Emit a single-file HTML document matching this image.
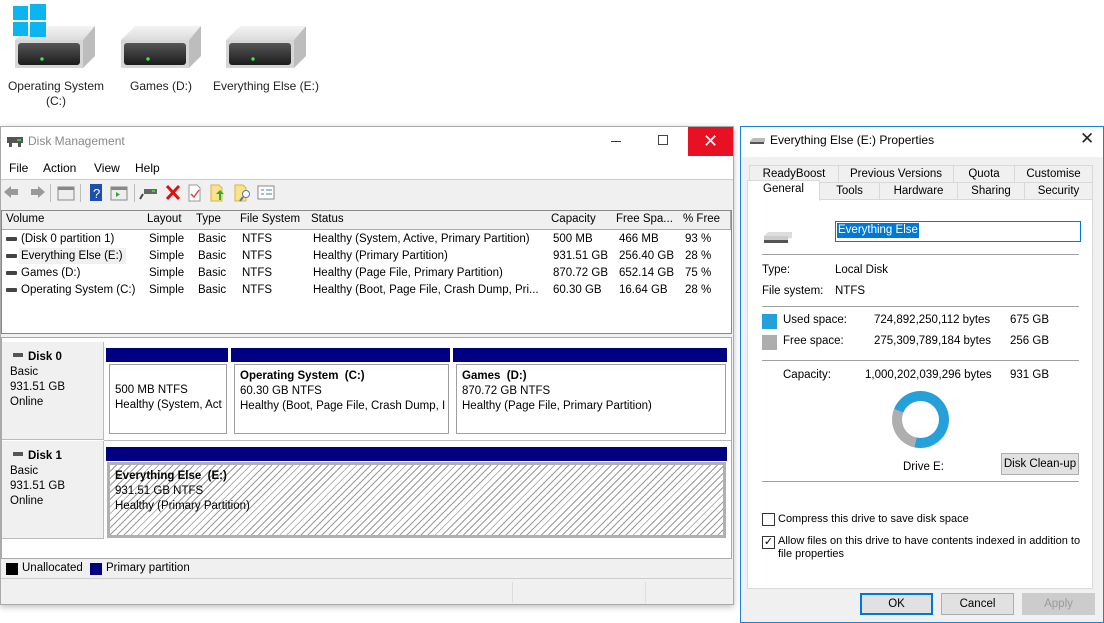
<!DOCTYPE html>
<html><head><meta charset="utf-8"><style>
*{margin:0;padding:0;box-sizing:border-box}
body{width:1104px;height:623px;background:#fff;position:relative;overflow:hidden;font-family:"Liberation Sans",sans-serif;font-size:11.5px;color:#000}
.a{position:absolute;white-space:nowrap}
.drv{position:absolute;width:84px;height:46px}
.lbl{position:absolute;width:110px;text-align:center;font-size:12px;line-height:15px;color:#222}
.hdr{position:absolute;top:211px;height:19px;background:#f0f0f0;border-right:1px solid #aaa;border-bottom:1px solid #aaa;padding:2px 4px;white-space:nowrap;overflow:hidden}
.row{position:absolute;white-space:nowrap}
.bar{position:absolute;background:#000080;height:14px}
.pbox{position:absolute;border:1px solid #a0a0a0;background:#fff;padding:4px 5px;line-height:15px;overflow:hidden;white-space:nowrap}
.tab{position:absolute;height:18px;border:1px solid #d9d9d9;background:#f0f0f0;text-align:center;line-height:16px}
.btn{position:absolute;height:22px;border:1px solid #adadad;background:#e1e1e1;text-align:center;line-height:20px}
.sep{position:absolute;height:1px;background:#a0a0a0}
.vi{position:absolute;left:6px;width:11px;height:4px;background:#444;border-radius:1px}
</style></head><body>

<!-- desktop icons -->
<svg width="0" height="0" style="position:absolute"><defs>
<linearGradient id="g1" x1="0" y1="0" x2="0" y2="1"><stop offset="0" stop-color="#f4f4f4"/><stop offset="1" stop-color="#dcdcdc"/></linearGradient>
<linearGradient id="g2" x1="0" y1="0" x2="0" y2="1"><stop offset="0" stop-color="#555"/><stop offset="1" stop-color="#1c1c1c"/></linearGradient>
<symbol id="hd" viewBox="0 0 84 46"><path d="M16 2 L82 2 L70 16 L2 16 Z" fill="url(#g1)"/><path d="M70 16 L82 2 L82 32 L70 44 Z" fill="#bdbdbd"/><rect x="2" y="16" width="68" height="28" fill="#d6d6d6"/><rect x="5" y="19" width="62" height="22" rx="3" fill="url(#g2)"/><circle cx="29" cy="35" r="1.7" fill="#3bea47"/></symbol>
</defs></svg>
<svg class="drv" style="left:13px;top:24px"><use href="#hd"/></svg>
<svg class="drv" style="left:119px;top:24px"><use href="#hd"/></svg>
<svg class="drv" style="left:224px;top:24px"><use href="#hd"/></svg>
<svg class="a" style="left:13px;top:4px" width="34" height="33"><rect x="0" y="2" width="15" height="14" fill="#0cb4f0"/><rect x="17" y="0" width="16" height="16" fill="#0cb4f0"/><rect x="0" y="18" width="15" height="14" fill="#0cb4f0"/><rect x="17" y="18" width="16" height="16" fill="#0cb4f0"/></svg>
<div class="lbl" style="left:1px;top:79px">Operating System<br>(C:)</div>
<div class="lbl" style="left:106px;top:79px">Games (D:)</div>
<div class="lbl" style="left:211px;top:79px">Everything Else (E:)</div>

<!-- Disk management window -->
<div class="a" style="left:0;top:126px;width:734px;height:479px;border:1px solid #aaa;background:#f0f0f0;box-shadow:0 2px 6px rgba(0,0,0,.25)"></div>
<div class="a" style="left:1px;top:127px;width:732px;height:52px;background:#fff"></div>
<svg class="a" style="left:7px;top:134px" width="16" height="14"><rect x="0" y="3" width="16" height="6" fill="#555"/><rect x="10" y="5" width="4" height="2" fill="#4c4"/><rect x="2" y="9" width="3" height="4" fill="#555"/><rect x="11" y="9" width="3" height="4" fill="#555"/></svg>
<div class="a" style="left:28px;top:134px;color:#888;font-size:12px">Disk Management</div>
<div class="a" style="left:611px;top:141px;width:10px;height:1px;background:#333"></div>
<div class="a" style="left:658px;top:135px;width:10px;height:10px;border:1px solid #444"></div>
<div class="a" style="left:688px;top:127px;width:45px;height:29px;background:#e81123;color:#fff;text-align:center;font-size:18px;line-height:28px">✕</div>
<div class="a" style="left:9px;top:161px;font-size:12px">File</div>
<div class="a" style="left:43px;top:161px;font-size:12px">Action</div>
<div class="a" style="left:94px;top:161px;font-size:12px">View</div>
<div class="a" style="left:135px;top:161px;font-size:12px">Help</div>
<div class="a" style="left:1px;top:179px;width:732px;height:1px;background:#ccc"></div>
<!-- toolbar icons -->
<svg class="a" style="left:3px;top:183px" width="280" height="20">
<path d="M1 9 L8 3 L8 6 L15 6 L15 12 L8 12 L8 15 Z" fill="#999"/>
<path d="M42 9 L35 3 L35 6 L28 6 L28 12 L35 12 L35 15 Z" fill="#999"/>
<rect x="47" y="1" width="1" height="18" fill="#bbb"/>
<rect x="55" y="4" width="16" height="13" fill="#eee" stroke="#888"/><rect x="55" y="4" width="16" height="3" fill="#888"/>
<rect x="77" y="1" width="1" height="18" fill="#bbb"/>
<rect x="87" y="1" width="12" height="17" fill="#1c4fb0"/><text x="90" y="15" fill="#fff" font-size="13" font-family="Liberation Sans">?</text>
<rect x="108" y="4" width="16" height="13" fill="#eee" stroke="#888"/><rect x="108" y="4" width="16" height="3" fill="#888"/><path d="M113 9 L117 11.5 L113 14Z" fill="#3a3"/>
<rect x="131" y="1" width="1" height="18" fill="#bbb"/>
<rect x="141" y="6" width="13" height="5" fill="#666"/><rect x="149" y="7" width="3" height="2" fill="#4c4"/><path d="M140 11 L137 16" stroke="#444" stroke-width="2"/>
<path d="M164 3 L176 16 M176 3 L164 16" stroke="#d11" stroke-width="3"/>
<path d="M186 2 L194 2 L197 5 L197 18 L186 18Z" fill="#fff" stroke="#999"/><path d="M188 11 L191 14 L196 7" stroke="#d44" fill="none" stroke-width="1.5"/>
<path d="M208 2 L216 2 L219 5 L219 18 L208 18Z" fill="#fbe38a" stroke="#d8b44a"/><path d="M216 17 L216 11 L213 11 L217 7 L221 11 L218 11 L218 17Z" fill="#3a3"/>
<path d="M232 2 L240 2 L243 5 L243 18 L232 18Z" fill="#fbe38a" stroke="#d8b44a"/><circle cx="243" cy="11" r="3.5" fill="#fff" stroke="#57a"/><path d="M240 14 L237 18" stroke="#57a" stroke-width="2"/>
<rect x="255" y="3" width="16" height="13" fill="#fff" stroke="#888"/><path d="M258 7h3M258 11h3M263 7h6M263 11h6" stroke="#57a"/>
</svg>
<!-- list -->
<div class="a" style="left:1px;top:210px;width:731px;height:124px;background:#fff;border:1px solid #888"></div>
<div class="hdr" style="left:2px;width:142px">Volume</div>
<div class="hdr" style="left:143px;width:50px">Layout</div>
<div class="hdr" style="left:192px;width:45px">Type</div>
<div class="hdr" style="left:236px;width:72px">File System</div>
<div class="hdr" style="left:307px;width:241px">Status</div>
<div class="hdr" style="left:547px;width:66px">Capacity</div>
<div class="hdr" style="left:612px;width:68px">Free Spa...</div>
<div class="hdr" style="left:679px;width:52px">% Free</div>
<div class="a" style="left:19px;top:248px;width:107px;height:16px;background:#f0f0f0"></div>
<div class="vi" style="top:237px"></div><div class="vi" style="top:254px"></div><div class="vi" style="top:271px"></div><div class="vi" style="top:288px"></div>
<div class="row" style="left:21px;top:231px;line-height:17px">(Disk 0 partition 1)<br>Everything Else (E:)<br>Games (D:)<br>Operating System (C:)</div>
<div class="row" style="left:149px;top:231px;line-height:17px">Simple<br>Simple<br>Simple<br>Simple</div>
<div class="row" style="left:198px;top:231px;line-height:17px">Basic<br>Basic<br>Basic<br>Basic</div>
<div class="row" style="left:242px;top:231px;line-height:17px">NTFS<br>NTFS<br>NTFS<br>NTFS</div>
<div class="row" style="left:313px;top:231px;line-height:17px">Healthy (System, Active, Primary Partition)<br>Healthy (Primary Partition)<br>Healthy (Page File, Primary Partition)<br>Healthy (Boot, Page File, Crash Dump, Pri...</div>
<div class="row" style="left:553px;top:231px;line-height:17px">500 MB<br>931.51 GB<br>870.72 GB<br>60.30 GB</div>
<div class="row" style="left:619px;top:231px;line-height:17px">466 MB<br>256.40 GB<br>652.14 GB<br>16.64 GB</div>
<div class="row" style="left:685px;top:231px;line-height:17px">93 %<br>28 %<br>75 %<br>28 %</div>
<!-- graphic area -->
<div class="a" style="left:1px;top:337px;width:731px;height:222px;background:#fff;border:1px solid #aaa"></div>
<div class="a" style="left:2px;top:342px;width:102px;height:98px;background:#f0f0f0;border-right:1px solid #bbb;border-bottom:1px solid #bbb"></div>
<div class="a" style="left:2px;top:441px;width:102px;height:98px;background:#f0f0f0;border-right:1px solid #bbb;border-bottom:1px solid #bbb"></div>
<div class="a" style="left:104px;top:440px;width:627px;height:1px;background:#bbb"></div>
<div class="a" style="left:13px;top:353px;width:10px;height:4px;background:#555"></div>
<div class="a" style="left:13px;top:452px;width:10px;height:4px;background:#555"></div>
<div class="a" style="left:10px;top:350px;line-height:15px"><b style="margin-left:18px">Disk 0</b><br>Basic<br>931.51 GB<br>Online</div>
<div class="a" style="left:10px;top:449px;line-height:15px"><b style="margin-left:18px">Disk 1</b><br>Basic<br>931.51 GB<br>Online</div>
<div class="bar" style="left:106px;top:348px;width:122px"></div>
<div class="bar" style="left:231px;top:348px;width:219px"></div>
<div class="bar" style="left:453px;top:348px;width:274px"></div>
<div class="pbox" style="left:109px;top:364px;width:118px;height:70px;padding-top:18px">500 MB NTFS<br>Healthy (System, Act</div>
<div class="pbox" style="left:234px;top:364px;width:215px;height:70px"><b>Operating System&nbsp; (C:)</b><br>60.30 GB NTFS<br>Healthy (Boot, Page File, Crash Dump, I</div>
<div class="pbox" style="left:456px;top:364px;width:270px;height:70px"><b>Games&nbsp; (D:)</b><br>870.72 GB NTFS<br>Healthy (Page File, Primary Partition)</div>
<div class="bar" style="left:106px;top:447px;width:621px"></div>
<div class="pbox" style="left:107px;top:462px;width:619px;height:76px;border:3px solid #b0b0b0;background:repeating-linear-gradient(135deg,#fff 0 4px,#9a9a9a 4px 5px)"><b>Everything Else&nbsp; (E:)</b><br>931.51 GB NTFS<br>Healthy (Primary Partition)</div>
<div class="a" style="left:1px;top:559px;width:731px;height:20px;background:#f0f0f0;border-bottom:1px solid #ccc"></div>
<div class="a" style="left:6px;top:563px;width:12px;height:12px;background:#000"></div>
<div class="a" style="left:22px;top:562px">Unallocated</div>
<div class="a" style="left:90px;top:563px;width:12px;height:12px;background:#000080"></div>
<div class="a" style="left:106px;top:562px">Primary partition</div>
<div class="a" style="left:512px;top:582px;width:1px;height:21px;background:#ddd"></div>
<div class="a" style="left:645px;top:582px;width:1px;height:21px;background:#ddd"></div>

<!-- Properties dialog -->
<div class="a" style="left:740px;top:126px;width:364px;height:497px;border:1px solid #1883d7;background:#f0f0f0"></div>
<div class="a" style="left:741px;top:127px;width:362px;height:30px;background:#fff"></div>
<svg class="a" style="left:750px;top:137px" width="16" height="8"><path d="M0 4 L3 1 L15 1 L15 5 L0 7Z" fill="#bbb"/><rect x="0" y="5" width="14" height="2" fill="#555"/></svg>
<div class="a" style="left:770px;top:133px;font-size:12px">Everything Else (E:) Properties</div>
<div class="a" style="left:1080px;top:129px;font-size:17px;color:#222">✕</div>
<div class="a" style="left:747px;top:199px;width:346px;height:390px;background:#fff;border:1px solid #d9d9d9"></div>
<div class="tab" style="left:749px;top:165px;width:90px">ReadyBoost</div>
<div class="tab" style="left:838px;top:165px;width:116px">Previous Versions</div>
<div class="tab" style="left:953px;top:165px;width:62px">Quota</div>
<div class="tab" style="left:1014px;top:165px;width:79px">Customise</div>
<div class="tab" style="left:819px;top:182px;width:61px">Tools</div>
<div class="tab" style="left:879px;top:182px;width:79px">Hardware</div>
<div class="tab" style="left:957px;top:182px;width:68px">Sharing</div>
<div class="tab" style="left:1024px;top:182px;width:69px">Security</div>
<div class="tab" style="left:747px;top:180px;width:73px;height:21px;background:#fff;border-bottom:none">General</div>
<svg class="a" style="left:763px;top:230px" width="30" height="14"><path d="M1 6 L5 2 L29 2 L29 8 L1 12Z" fill="#ddd"/><rect x="1" y="6" width="24" height="6" fill="#ccc"/><rect x="1" y="10" width="24" height="3" fill="#555"/></svg>
<div class="a" style="left:835px;top:221px;width:246px;height:21px;border:1px solid #0078d7;background:#fff"></div>
<div class="a" style="left:837px;top:223px;height:15px;padding:0 1px;background:#0078d7;color:#fff;line-height:15px">Everything Else</div>
<div class="sep" style="left:762px;top:254px;width:317px"></div>
<div class="a" style="left:762px;top:264px">Type:</div><div class="a" style="left:835px;top:264px">Local Disk</div>
<div class="a" style="left:762px;top:285px">File system:</div><div class="a" style="left:835px;top:285px">NTFS</div>
<div class="sep" style="left:762px;top:306px;width:317px"></div>
<div class="a" style="left:762px;top:314px;width:15px;height:15px;background:#26a0da"></div>
<div class="a" style="left:783px;top:314px">Used space:</div><div class="a" style="left:874px;top:314px">724,892,250,112 bytes</div><div class="a" style="left:1010px;top:314px">675 GB</div>
<div class="a" style="left:762px;top:335px;width:15px;height:15px;background:#aeaeae"></div>
<div class="a" style="left:783px;top:335px">Free space:</div><div class="a" style="left:874px;top:335px">275,309,789,184 bytes</div><div class="a" style="left:1010px;top:335px">256 GB</div>
<div class="sep" style="left:762px;top:360px;width:317px"></div>
<div class="a" style="left:783px;top:369px">Capacity:</div><div class="a" style="left:865px;top:369px">1,000,202,039,296 bytes</div><div class="a" style="left:1010px;top:369px">931 GB</div>
<div class="a" style="left:892px;top:391px;width:57px;height:57px;border-radius:50%;background:conic-gradient(#26a0da 0 192deg,#aeaeae 192deg 292deg,#26a0da 292deg)"></div>
<div class="a" style="left:902px;top:401px;width:37px;height:37px;border-radius:50%;background:#fff"></div>
<div class="a" style="left:903px;top:461px">Drive E:</div>
<div class="btn" style="left:1001px;top:453px;width:78px">Disk Clean-up</div>
<div class="sep" style="left:762px;top:481px;width:317px"></div>
<div class="a" style="left:762px;top:513px;width:13px;height:13px;border:1px solid #333;background:#fff"></div>
<div class="a" style="left:778px;top:513px;font-size:11px">Compress this drive to save disk space</div>
<div class="a" style="left:762px;top:536px;width:13px;height:13px;border:1px solid #333;background:#fff;font-size:11px;line-height:11px;text-align:center">✓</div>
<div class="a" style="left:778px;top:535px;line-height:13px;font-size:11px">Allow files on this drive to have contents indexed in addition to<br>file properties</div>
<div class="btn" style="left:860px;top:593px;width:73px;border:2px solid #0078d7;line-height:18px">OK</div>
<div class="btn" style="left:941px;top:593px;width:73px">Cancel</div>
<div class="btn" style="left:1022px;top:593px;width:73px;color:#999;border-color:#ccc;background:#ccc">Apply</div>
</body></html>
